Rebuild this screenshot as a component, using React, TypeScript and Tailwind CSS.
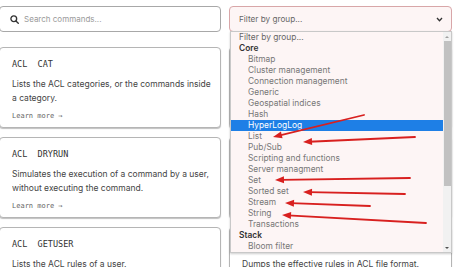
import React from "react";

const cards = [
  { t: "ACL  CAT", d: "Lists the ACL categories, or the commands inside a category." },
  { t: "ACL  DELUSER", d: "Deletes ACL users, and terminates their connections." },
  { t: "ACL  DRYRUN", d: "Simulates the execution of a command by a user, without executing the command." },
  { t: "ACL  GENPASS", d: "Generates a pseudorandom, secure password that can be used to identify ACL users." },
  { t: "ACL  GETUSER", d: "Lists the ACL rules of a user." },
  { t: "ACL  LIST", d: "Dumps the effective rules in ACL file format." },
];

type Opt = { label: string; kind: "ph" | "group" | "item"; sel?: boolean };
const options: Opt[] = [
  { label: "Filter by group...", kind: "ph" },
  { label: "Core", kind: "group" },
  { label: "Bitmap", kind: "item" },
  { label: "Cluster management", kind: "item" },
  { label: "Connection management", kind: "item" },
  { label: "Generic", kind: "item" },
  { label: "Geospatial indices", kind: "item" },
  { label: "Hash", kind: "item" },
  { label: "HyperLogLog", kind: "item", sel: true },
  { label: "List", kind: "item" },
  { label: "Pub/Sub", kind: "item" },
  { label: "Scripting and functions", kind: "item" },
  { label: "Server managment", kind: "item" },
  { label: "Set", kind: "item" },
  { label: "Sorted set", kind: "item" },
  { label: "Stream", kind: "item" },
  { label: "String", kind: "item" },
  { label: "Transactions", kind: "item" },
  { label: "Stack", kind: "group" },
  { label: "Bloom filter", kind: "item" },
];

const arrows: [number, number, number, number][] = [
  [364, 115, 273, 137],
  [415, 137, 303, 142],
  [410, 178, 275, 180],
  [405, 194, 303, 192],
  [370, 206, 285, 203],
  [426, 223, 282, 215],
];

function head(x1: number, y1: number, x2: number, y2: number) {
  const dx = x2 - x1;
  const dy = y2 - y1;
  const len = Math.hypot(dx, dy);
  const ux = dx / len;
  const uy = dy / len;
  const L = 9;
  const W = 3.5;
  const bx = x2 - ux * L;
  const by = y2 - uy * L;
  const px = -uy * W;
  const py = ux * W;
  return `${x2},${y2} ${bx + px},${by + py} ${bx - px},${by - py}`;
}

function Card({ t, d }: { t: string; d: string }) {
  return (
    <div className="border border-[#b5b5b5] rounded-[4px] bg-white shadow-[0_1px_1px_rgba(0,0,0,0.25)] pt-[8px] pb-[7px] pl-[12px] pr-[6px] h-[81px] overflow-hidden">
      <div className="font-['DejaVu_Sans_Mono',monospace] text-[8.5px] leading-[16px] text-[#333] whitespace-pre">{t}</div>
      <div className="mt-[5px] text-[8.5px] leading-[14px] text-[#444] h-[28px] overflow-hidden">{d}</div>
      <div className="mt-[5px] font-['DejaVu_Sans_Mono',monospace] text-[7px] leading-[12px] text-[#666]">Learn more →</div>
    </div>
  );
}

export default function App() {
  return (
    <div className="relative w-[474px] h-[267px] overflow-hidden bg-white font-['Inter',sans-serif]">
      <div className="ml-[-1px] w-[454px] pt-[6px]">
        <div className="grid grid-cols-[222px_223px] gap-x-[8px]">
          <div className="h-[26px] border border-[#a8a8a8] rounded-[4px] flex items-center pl-[10px] gap-[5px]">
            <svg width="9" height="9" viewBox="0 0 10 10" fill="none" stroke="#333" strokeWidth="1.5">
              <circle cx="4.2" cy="4.2" r="3.2" />
              <line x1="6.6" y1="6.6" x2="9.2" y2="9.2" strokeLinecap="round" />
            </svg>
            <span className="text-[8px] text-[#9a9a9a]">Search commands...</span>
          </div>
          <div className="h-[26px] border border-[#d8a6a8] rounded-[4px] bg-[#fdf5f5] flex items-center justify-between pl-[9px] pr-[8px]">
            <span className="text-[8.2px] text-[#666]">Filter by group...</span>
            <svg width="7" height="5" viewBox="0 0 7 5" fill="none" stroke="#333" strokeWidth="1.3">
              <polyline points="1,1 3.5,3.8 6,1" />
            </svg>
          </div>
        </div>
        <div className="grid grid-cols-[222px_223px] gap-x-[8px] gap-y-[9px] mt-[15px]">
          {cards.map((c) => (
            <Card key={c.t} t={c.t} d={c.d} />
          ))}
        </div>
      </div>

      <div className="absolute left-[230px] top-[31px] w-[222px] h-[222px] border border-[#c8c8c8] bg-[#fdf5f5] shadow-[0_1px_2px_rgba(0,0,0,0.2)] flex">
        <div className="flex-1 flex flex-col">
          {options.map((o) => (
            <div
              key={o.label}
              className={
                "h-[11px] leading-[11px] text-[8.4px] whitespace-nowrap " +
                (o.sel
                  ? "bg-[#1e7fe6] text-white pl-[17px]"
                  : o.kind === "group"
                  ? "text-[#333] font-semibold pl-[8px]"
                  : o.kind === "ph"
                  ? "text-[#666] pl-[8px]"
                  : "text-[#777] pl-[17px]")
              }
            >
              {o.label}
            </div>
          ))}
        </div>
        <div className="w-[8px] flex flex-col items-center bg-[#f1f1f1]">
          <div className="h-[9px] flex items-center justify-center">
            <div className="w-0 h-0 border-l-[2px] border-r-[2px] border-b-[2px] border-l-transparent border-r-transparent border-b-[#a0a0a0]" />
          </div>
          <div className="w-[7px] h-[145px] bg-[#c1c1c1]" />
          <div className="flex-1" />
          <div className="h-[9px] flex items-center justify-center">
            <div className="w-0 h-0 border-l-[2px] border-r-[2px] border-t-[2px] border-l-transparent border-r-transparent border-t-[#505050]" />
          </div>
        </div>
      </div>

      <svg className="absolute left-0 top-0 pointer-events-none" width="474" height="267">
        {arrows.map(([x1, y1, x2, y2], i) => {
          const dx = x2 - x1;
          const dy = y2 - y1;
          const len = Math.hypot(dx, dy);
          const ex = x2 - (dx / len) * 6;
          const ey = y2 - (dy / len) * 6;
          return (
            <g key={i}>
              <line x1={x1} y1={y1} x2={ex} y2={ey} stroke="#d8201f" strokeWidth="1.8" strokeLinecap="round" />
              <polygon points={head(x1, y1, x2, y2)} fill="#d8201f" />
            </g>
          );
        })}
      </svg>
    </div>
  );
}
